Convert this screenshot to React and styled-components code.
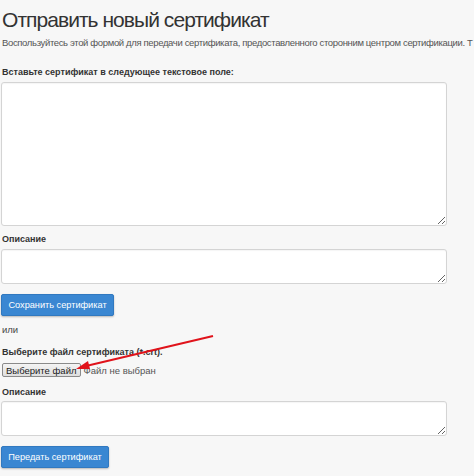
import React from "react";
import styled, { createGlobalStyle } from "styled-components";

const Global = createGlobalStyle`
  html, body { margin: 0; padding: 0; background: #f7f7f7; }
  body { font-family: "Liberation Sans", Arial, sans-serif; color: #333; }
  * { box-sizing: border-box; }
`;

const Page = styled.div`
  width: 474px;
  height: 476px;
  overflow: hidden;
  padding: 6px 0 0 1px;
  display: flex;
  flex-direction: column;
`;

const Title = styled.h1`
  margin: 0 0 0 1px;
  font-size: 21px;
  letter-spacing: -0.95px;
  font-weight: 400;
  line-height: 28px;
  color: #333;
`;

const Lead = styled.p`
  margin: 2px 0 0 1px;
  font-size: 9.5px;
  letter-spacing: -0.35px;
  line-height: 13px;
  color: #555;
  white-space: nowrap;
  overflow: hidden;
`;

const Label = styled.label`
  display: block;
  margin: ${(p) => p.$top || 0}px 0 0 1px;
  font-size: 9px;
  font-weight: 700;
  line-height: 12px;
  color: #333;
`;

const Area = styled.textarea`
  display: block;
  flex: none;
  width: 446px;
  height: ${(p) => p.$h}px;
  margin-top: ${(p) => p.$top || 4}px;
  border: 1px solid #d4d4d4;
  border-radius: 3px;
  background: #fff;
  box-shadow: inset 0 1px 1px rgba(0,0,0,0.04);
  font: inherit;
  padding: 4px;
`;

const Primary = styled.button`
  flex: none;
  align-self: flex-start;
  margin-top: ${(p) => p.$top}px;
  height: 22px;
  width: ${(p) => p.$w}px;
  padding: 0;
  background: #3a87d2;
  border: 1px solid #3179c0;
  border-radius: 2px;
  color: #fff;
  font-family: "Liberation Sans", Arial, sans-serif;
  font-size: 9.2px;
  box-shadow: 0 1px 2px rgba(0,0,0,0.25);
`;

const Text = styled.div`
  margin: ${(p) => p.$top}px 0 0 1px;
  font-size: 9.5px;
  line-height: 12px;
  color: #444;
`;

const FileRow = styled.div`
  flex: none;
  display: flex;
  align-items: center;
  gap: 3px;
  height: 14px;
  margin: 5px 0 0 1px;
  font-size: 9.5px;
  color: #555;
`;

const FileButton = styled.span`
  display: inline-flex;
  align-items: center;
  height: 14px;
  padding: 0 3px;
  border: 1px solid #8a8a8a;
  border-radius: 2px;
  background: linear-gradient(#f4f4f4, #dedede);
  color: #222;
  font-size: 9.5px;
`;

const Arrow = styled.svg`
  position: absolute;
  left: 0;
  top: 0;
  pointer-events: none;
`;

const Wrap = styled.div`
  position: relative;
`;

export default function App() {
  return (
    <Wrap>
      <Global />
      <Page>
        <Title>Отправить новый сертификат</Title>
        <Lead>Воспользуйтесь этой формой для передачи сертификата, предоставленного сторонним центром сертификации. Т</Lead>
        <Label $top={17}>Вставьте сертификат в следующее текстовое поле:</Label>
        <Area $h={144} $top={4} />
        <Label $top={7}>Описание</Label>
        <Area $h={35} $top={4} />
        <Primary $top={10} $w={113}>Сохранить сертификат</Primary>
        <Text $top={8}>или</Text>
        <Label $top={10}>Выберите файл сертификата (*.crt).</Label>
        <FileRow>
          <FileButton>Выберите файл</FileButton>
          <span>Файл не выбран</span>
        </FileRow>
        <Label $top={9}>Описание</Label>
        <Area $h={35} $top={3} />
        <Primary $top={10} $w={108}>Передать сертификат</Primary>
      </Page>
      <Arrow width="474" height="476" viewBox="0 0 474 476">
        <line x1="213" y1="336" x2="86" y2="366" stroke="#e0131b" strokeWidth="2" />
        <polygon points="76,369 88,361 90,369" fill="#e0131b" />
      </Arrow>
    </Wrap>
  );
}
